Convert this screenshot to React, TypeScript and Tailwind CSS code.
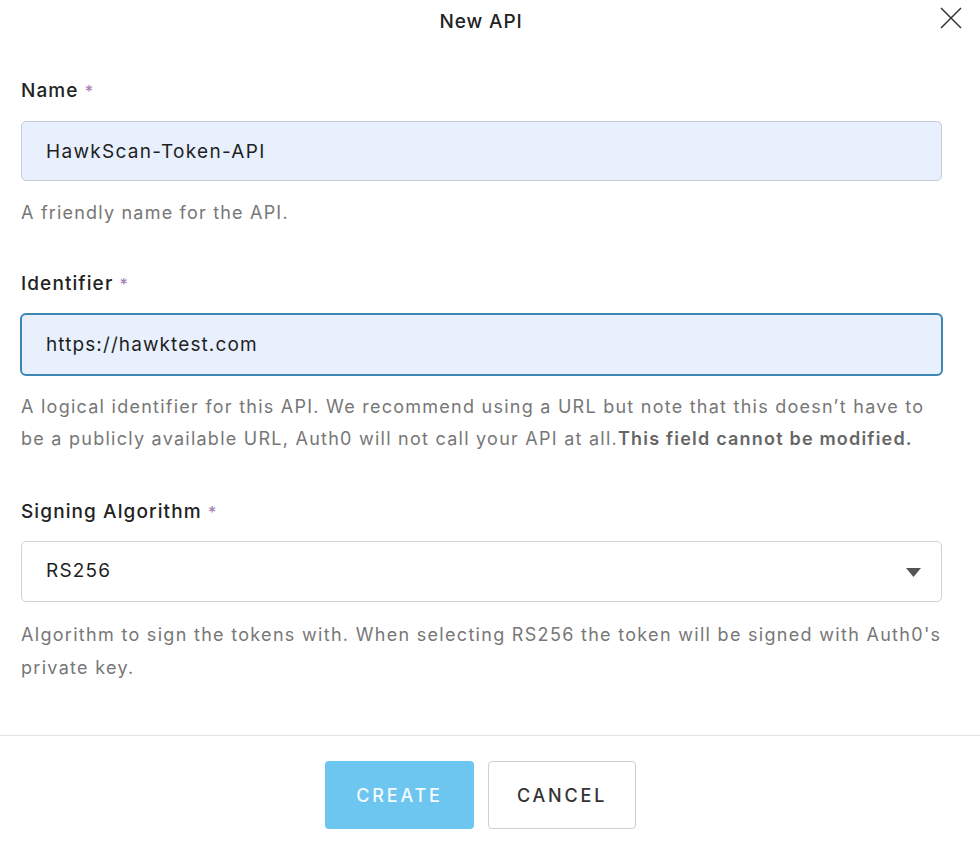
const font = { fontFamily: "Inter, 'Noto Sans', sans-serif" };

function Label({ text }: { text: string }) {
  return (
    <label className="block text-[19px] leading-6 font-medium tracking-[1.1px] text-[#222]">
      {text} <span className="text-[#a57fb8] text-[16px] align-top">*</span>
    </label>
  );
}

export default function App() {
  return (
    <div className="w-[980px] h-[849px] bg-white relative overflow-hidden" style={font}>
      {/* Header */}
      <header className="h-[44px] flex items-center justify-center pr-[18px]">
        <h1 className="text-[19px] font-medium tracking-[0.9px] text-[#222] mt-[1px]">New API</h1>
      </header>
      <button className="absolute left-[940px] top-[7px]">
        <svg width="22" height="22" viewBox="0 0 22 22" fill="none">
          <path d="M1 1 L21 21 M21 1 L1 21" stroke="#333" strokeWidth="1.5" />
        </svg>
      </button>

      {/* Form */}
      <div className="flex flex-col px-[21px] pr-[38px] pt-[35px]">
        <Label text="Name" />
        <input
          readOnly
          value="HawkScan-Token-API"
          className="mt-[18px] h-[60px] w-full rounded-[5px] border border-[#c5cbd4] bg-[#e8f0fe] px-[24px] text-[19px] tracking-[1.3px] text-[#1f1f1f] outline-none"
        />
        <p className="mt-[16px] text-[18px] leading-8 tracking-[1.2px] text-[#777]">A friendly name for the API.</p>

        <div className="mt-[43px]">
          <Label text="Identifier" />
        </div>
        <input
          readOnly
          value="https://hawktest.com"
          className="mt-[17px] -mx-[1px] h-[63px] rounded-[6px] border-[2.5px] border-[#3e86b3] bg-[#e8f0fe] px-[24px] text-[19px] tracking-[1.1px] text-[#1f1f1f] outline-none"
        />
        <p className="mt-[15px] text-[18px] leading-8 tracking-[1.25px] text-[#777]">
          A logical identifier for this API. We recommend using a URL but note that this doesn’t have to be a
          publicly available URL, Auth0 will not call your API at all.
          <span className="font-semibold tracking-[1.2px] text-[#666]">This field cannot be modified.</span>
        </p>

        <div className="mt-[45px]">
          <Label text="Signing Algorithm" />
        </div>
        <div className="mt-[17px] h-[61px] flex items-center justify-between rounded-[5px] border border-[#d2d2d2] bg-white pl-[24px] pr-[20px]">
          <span className="text-[19px] tracking-[1.2px] text-[#1f1f1f]">RS256</span>
          <svg width="15" height="9" viewBox="0 0 15 9" className="mt-[1px]">
            <path d="M0 0 H15 L7.5 9 Z" fill="#555" />
          </svg>
        </div>
        <p className="mt-[16px] text-[18px] leading-[33px] tracking-[1.3px] text-[#777]">
          Algorithm to sign the tokens with. When selecting RS256 the token will be signed with Auth0's private
          key.
        </p>
      </div>

      {/* Footer */}
      <div className="mt-[51px] border-t border-[#e2e2e2]">
        <div className="mt-[25px] flex justify-center gap-[14px] pr-[19px]">
          <button className="w-[149px] h-[68px] rounded-[4px] bg-[#6cc6f0] text-[#f4fbff] text-[18px] font-medium tracking-[2.8px]">
            CREATE
          </button>
          <button className="w-[148px] h-[68px] rounded-[4px] border-[1.5px] border-[#cfcfcf] bg-white text-[#333] text-[18px] font-medium tracking-[2.8px]">
            CANCEL
          </button>
        </div>
      </div>
    </div>
  );
}
